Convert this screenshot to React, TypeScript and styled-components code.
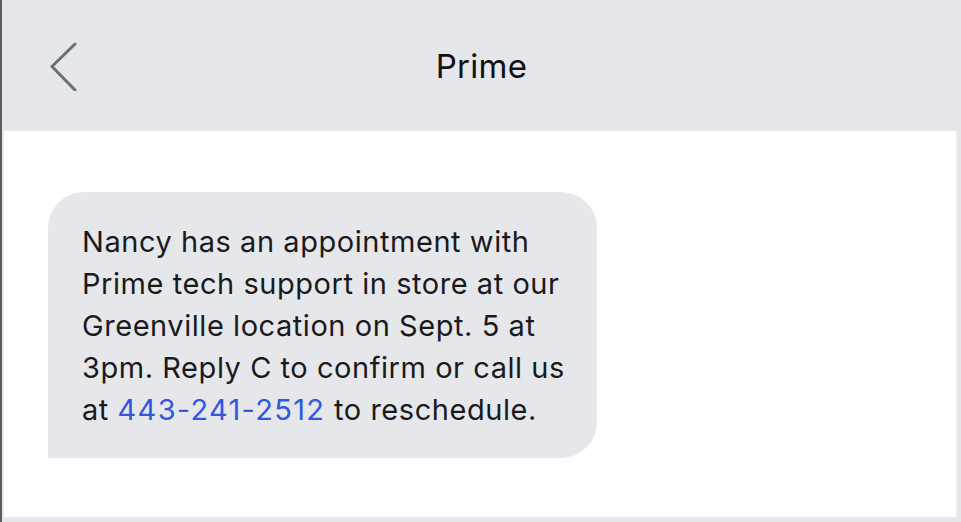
import React from "react";
import styled, { createGlobalStyle } from "styled-components";

const Global = createGlobalStyle`
  html, body { margin: 0; padding: 0; }
  body { background: #e5e7eb; font-family: Inter, "Noto Sans", sans-serif; }
`;

const Frame = styled.div`
  width: 961px;
  height: 522px;
  box-sizing: border-box;
  background: #e5e7eb;
  border-left: 2px solid #5b5d61;
  display: flex;
  flex-direction: column;
  overflow: hidden;
`;

const Header = styled.header`
  height: 131px;
  display: grid;
  grid-template-columns: 100px 1fr 100px;
  align-items: center;
  flex-shrink: 0;
`;

const BackButton = styled.button`
  border: 0;
  background: none;
  padding: 0 0 0 47px;
  display: flex;
  align-items: center;
  height: 100%;
  cursor: pointer;
`;

const Title = styled.h1`
  margin: 0;
  text-align: center;
  font-weight: 400;
  font-size: 33px;
  color: #111;
  letter-spacing: 0.3px;
`;

const Body = styled.main`
  flex: 1;
  background: #fff;
  margin: 0 4px 5px 2px;
  padding: 61px 0 0 44px;
  border-right: 1px solid #eceef1;
`;

const Bubble = styled.div`
  width: 549px;
  box-sizing: border-box;
  background: #e5e7eb;
  border-radius: 36px 36px 36px 0;
  padding: 29px 20px 27px 34px;
  font-size: 29px;
  line-height: 42px;
  letter-spacing: 0.55px;
  color: #1a1a1c;
`;

const Link = styled.a`
  color: #3457e0;
  text-decoration: none;
  letter-spacing: 1.3px;
`;

export default function App() {
  return (
    <>
      <Global />
      <Frame>
        <Header>
          <BackButton aria-label="Back">
            <svg width="30" height="50" viewBox="0 0 30 50">
              <path d="M26 3 L3 25.5 L26 49" fill="none" stroke="#6b6e74" strokeWidth="3" strokeLinecap="round" strokeLinejoin="round" />
            </svg>
          </BackButton>
          <Title>Prime</Title>
          <span />
        </Header>
        <Body>
          <Bubble>
            Nancy has an appointment with Prime tech support in store at our Greenville location on Sept. 5 at 3pm. Reply C to confirm or call us at <Link href="#">443-241-2512</Link> to reschedule.
          </Bubble>
        </Body>
      </Frame>
    </>
  );
}
